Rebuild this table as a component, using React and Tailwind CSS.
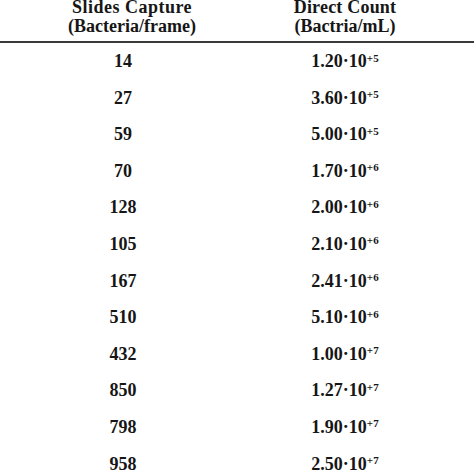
const rows = [
  ["14", "1.20", "+5"],
  ["27", "3.60", "+5"],
  ["59", "5.00", "+5"],
  ["70", "1.70", "+6"],
  ["128", "2.00", "+6"],
  ["105", "2.10", "+6"],
  ["167", "2.41", "+6"],
  ["510", "5.10", "+6"],
  ["432", "1.00", "+7"],
  ["850", "1.27", "+7"],
  ["798", "1.90", "+7"],
  ["958", "2.50", "+7"],
];

export default function App() {
  return (
    <div
      className="w-[474px] h-[474px] overflow-hidden bg-white text-[#161616] font-bold text-[18px]"
      style={{ fontFamily: '"Liberation Serif", "Times New Roman", serif' }}
    >
      {/* header */}
      <div className="grid grid-cols-[264px_162px] -mt-[2px] pb-[5px] border-b-2 border-[#3a3a3a] leading-[19px]">
        <div className="text-center">
          <div className="tracking-[0.5px]">Slides Capture</div>
          <div>(Bacteria/frame)</div>
        </div>
        <div className="text-center">
          <div className="tracking-[0.2px]">Direct Count</div>
          <div>(Bactria/mL)</div>
        </div>
      </div>

      {/* body */}
      {rows.map(([cap, mant, exp]) => (
        <div key={cap} className="grid grid-cols-[264px_162px] h-[36.6px] leading-[36.6px]">
          <div className="text-center pr-[18px]">{cap}</div>
          <div className="text-center">
            {mant}·10<sup className="text-[11px]">{exp}</sup>
          </div>
        </div>
      ))}
    </div>
  );
}
